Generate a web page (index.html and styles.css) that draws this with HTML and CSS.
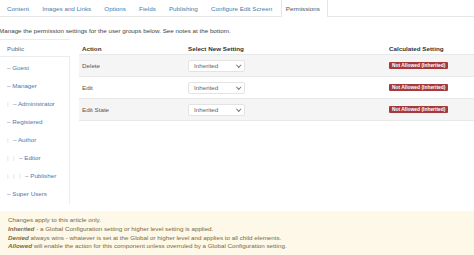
FILE: index.html
```html
<!DOCTYPE html>
<html>
<head>
<meta charset="utf-8">
<link rel="stylesheet" href="styles.css">
</head>
<body>
<nav class="tabs">
  <span class="tab">Content</span>
  <span class="tab">Images and Links</span>
  <span class="tab">Options</span>
  <span class="tab">Fields</span>
  <span class="tab">Publishing</span>
  <span class="tab">Configure Edit Screen</span>
  <span class="tab active">Permissions</span>
</nav>
<p class="intro">Manage the permission settings for the user groups below. See notes at the bottom.</p>
<div class="main">
  <aside class="groups">
    <div class="public">Public</div>
    <ul class="group-list">
      <li><span class="dash">–</span> Guest</li>
      <li><span class="dash">–</span> Manager</li>
      <li><span class="pipe">|</span><span class="dash">–</span> Administrator</li>
      <li><span class="dash">–</span> Registered</li>
      <li><span class="pipe">|</span><span class="dash">–</span> Author</li>
      <li><span class="pipe">|</span><span class="pipe">|</span><span class="dash">–</span> Editor</li>
      <li><span class="pipe">|</span><span class="pipe">|</span><span class="pipe">|</span><span class="dash">–</span> Publisher</li>
      <li><span class="dash">–</span> Super Users</li>
    </ul>
  </aside>
  <table class="perms">
    <colgroup><col class="k1"><col class="k2"><col class="k3"></colgroup>
    <thead>
      <tr><th>Action</th><th>Select New Setting</th><th>Calculated Setting</th></tr>
    </thead>
    <tbody>
      <tr class="odd"><td>Delete</td><td><span class="select">Inherited<span class="chev"></span></span></td><td><span class="badge">Not Allowed (Inherited)</span></td></tr>
      <tr><td>Edit</td><td><span class="select">Inherited<span class="chev"></span></span></td><td><span class="badge">Not Allowed (Inherited)</span></td></tr>
      <tr class="odd"><td>Edit State</td><td><span class="select">Inherited<span class="chev"></span></span></td><td><span class="badge">Not Allowed (Inherited)</span></td></tr>
    </tbody>
  </table>
</div>
<div class="notice">
  <p>Changes apply to this article only.</p>
  <p><b>Inherited</b> - a Global Configuration setting or higher level setting is applied.</p>
  <p><b>Denied</b> always wins - whatever is set at the Global or higher level and applies to all child elements.</p>
  <p><b>Allowed</b> will enable the action for this component unless overruled by a Global Configuration setting.</p>
</div>
</body>
</html>
```
FILE: styles.css
```css
html, body {
  margin: 0;
  padding: 0;
  background: #fff;
}
body {
  font-family: "Liberation Sans", Arial, sans-serif;
  font-size: 6.25px;
  color: #444;
  height: 255px;
  overflow: hidden;
  display: flex;
  flex-direction: column;
}
.tabs {
  display: flex;
  height: 17px;
  border-bottom: 1px solid #e6e6e6;
  padding-left: 0.5px;
  box-sizing: border-box;
  flex: none;
}
.tab {
  padding: 0 6.6px;
  line-height: 17px;
  color: #4a79ad;
}
.tab.active {
  color: #555;
  background: #fff;
  border-left: 1px solid #e6e6e6;
  border-right: 1px solid #e6e6e6;
  padding: 0 7px 0 4px;
  margin-left: 2px;
  height: 17px;
}
.intro {
  margin: 0;
  padding: 9px 0 0 0;
  line-height: 10px;
  height: 13px;
  color: #444;
  margin-left: -1px;
  flex: none;
}
.main {
  display: flex;
  align-items: flex-start;
  gap: 9px;
}
.groups {
  width: 70px;
  flex: none;
}
.public {
  border-top: 1px solid #ececec;
  height: 16px;
  line-height: 17px;
  padding-left: 7px;
  color: #666;
}
.group-list {
  list-style: none;
  margin: 0;
  padding: 1.5px 0 0 0;
  border-top: 1px solid #ececec;
  border-right: 1px solid #ececec;
  height: 145px;
}
.group-list li {
  height: 18px;
  line-height: 18px;
  padding-left: 7px;
  color: #4a79ad;
  white-space: nowrap;
}
.pipe {
  color: #d4d4d4;
  display: inline-block;
  width: 6px;
}
.dash {
  color: #4a79ad;
}
.perms {
  flex: 1;
  border-collapse: collapse;
  table-layout: fixed;
}
.perms .k1 { width: 106px; }
.perms .k2 { width: 201px; }
.perms th {
  text-align: left;
  font-weight: bold;
  color: #333;
  height: 15px;
  padding: 2px 0 0 3px;
  border-top: 1px solid #fff;
  border-bottom: 1px solid #e8e8e8;
  box-sizing: border-box;
}
.perms td {
  height: 21px;
  padding: 0 0 0 3px;
  color: #555;
  border-bottom: 1px solid #e8e8e8;
}
.perms tr.odd td {
  background: #f5f5f5;
}
.select {
  display: inline-flex;
  align-items: center;
  justify-content: space-between;
  box-sizing: border-box;
  width: 57px;
  height: 12px;
  padding: 0 4px 0 5px;
  background: #fff;
  border: 1px solid #e3e3e3;
  border-radius: 2px;
  color: #666;
}
.chev {
  width: 2.5px;
  height: 2.5px;
  border-right: 1px solid #777;
  border-bottom: 1px solid #777;
  transform: rotate(45deg);
  margin-top: -2px;
}
.badge {
  display: inline-block;
  background: #a33a3c;
  color: #fff;
  font-weight: bold;
  font-size: 4.9px;
  line-height: 7px;
  padding: 0 3px;
  border-radius: 1px;
  position: relative;
  top: -1px;
}
.notice {
  margin-top: auto;
  height: 44px;
  box-sizing: border-box;
  background: #fdf8e7;
  padding: 5px 0 0 8px;
  color: #7a6a45;
  flex: none;
}
.notice p {
  margin: 0;
  line-height: 8.8px;
}
.notice b {
  font-style: italic;
  font-weight: bold;
}
```
